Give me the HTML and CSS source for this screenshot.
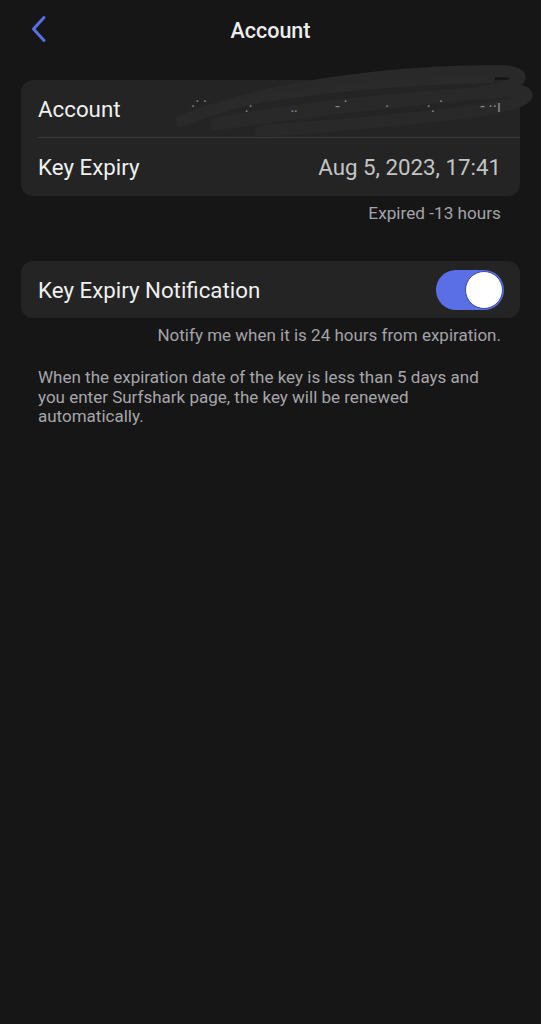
FILE: index.html
```html
<!DOCTYPE html>
<html>
<head>
<meta charset="utf-8">
<link rel="stylesheet" href="styles.css">
</head>
<body>
<div class="page">
  <header class="topbar">
    <svg class="back" width="18" height="28" viewBox="0 0 18 28"><path d="M14 2.5 L3.5 14 L14 25.5" fill="none" stroke="#5b6ee8" stroke-width="3" stroke-linecap="round" stroke-linejoin="round"/></svg>
    <h1 class="title">Account</h1>
  </header>

  <section class="card">
    <div class="row">
      <span class="label">Account</span>
      <span class="value redacted">
        <svg class="scribble" width="380" height="80" viewBox="0 0 380 80"><path d="M20 62 C100 30 220 12 340 12 C375 14 360 30 300 36 C220 44 130 54 50 66 C140 48 250 38 360 32 C378 38 350 48 300 54 C230 62 160 68 100 72" fill="none" stroke="#292929" stroke-width="12" stroke-linecap="round"/><path d="M60 48 C140 30 240 22 330 20" fill="none" stroke="#2a2a2a" stroke-width="8" stroke-linecap="round"/></svg>
        <span class="dots"><span>·˙ ˙</span><span>.·</span><span>‥</span><span>‐ ˙</span><span>·</span><span>·. ˙</span><span>- ··ı</span></span>
      </span>
    </div>
    <div class="divider"></div>
    <div class="row">
      <span class="label">Key Expiry</span>
      <span class="value">Aug 5, 2023, 17:41</span>
    </div>
  </section>
  <p class="note">Expired -13 hours</p>

  <section class="card card-toggle">
    <div class="row">
      <span class="label">Key Expiry Notification</span>
      <span class="toggle"><span class="knob"></span></span>
    </div>
  </section>
  <p class="note note-wide">Notify me when it is 24 hours from expiration.</p>

  <p class="info">When the expiration date of the key is less than 5 days and you enter Surfshark page, the key will be renewed automatically.</p>
</div>
</body>
</html>
```

FILE: styles.css
```css
html, body {
  margin: 0;
  padding: 0;
  background: #161616;
}
body {
  font-family: Roboto, "Noto Sans", sans-serif;
  color: #ececec;
  width: 541px;
  height: 1024px;
  overflow: hidden;
}
.page {
  padding: 0 21px;
}
.topbar {
  height: 60px;
  display: flex;
  align-items: center;
  justify-content: center;
  position: relative;
}
.back {
  position: absolute;
  left: 9px;
  top: 15px;
}
.title {
  margin: 0;
  font-size: 21.5px;
  font-weight: 500;
  color: #ededed;
}
.card {
  margin-top: 20px;
  background: #242424;
  border-radius: 12px;
}
.row {
  height: 57px;
  display: flex;
  align-items: center;
  justify-content: space-between;
  padding: 0 19px 0 17px;
}
.row + .divider + .row {
  height: 58px;
}
.divider {
  height: 1px;
  background: #3a3a3a;
  margin-left: 17px;
}
.label {
  font-size: 22.3px;
  color: #f0f0f0;
}
.value {
  font-size: 22.3px;
  color: #c4c4c4;
}
.redacted {
  position: relative;
  width: 310px;
  height: 40px;
}
.scribble {
  position: absolute;
  left: -30px;
  top: -30px;
}
.dots {
  position: absolute;
  left: 0;
  right: 0;
  top: 8px;
  display: flex;
  justify-content: space-between;
  font-size: 16px;
  color: #8a8a8a;
  white-space: pre;
}
.note {
  margin: 7px 19px 0 0;
  text-align: right;
  font-size: 17.2px;
  color: #a3a3a8;
  line-height: 20px;
}
.note-wide {
  font-size: 17px;
}
.card-toggle {
  margin-top: 38px;
}
.card-toggle .row {
  height: 57px;
}
.toggle {
  width: 68px;
  height: 40px;
  border-radius: 20px;
  background: #5a6fe6;
  display: flex;
  align-items: center;
  justify-content: flex-end;
  padding-right: 1px;
  box-sizing: border-box;
  margin-right: -3px;
}
.knob {
  width: 38px;
  height: 38px;
  border-radius: 50%;
  background: #ffffff;
  box-sizing: border-box;
  border: 1px solid #3b4aa8;
}
.info {
  margin: 23px 19px 0 17px;
  font-size: 17px;
  line-height: 19.7px;
  color: #a6a6aa;
}
```
